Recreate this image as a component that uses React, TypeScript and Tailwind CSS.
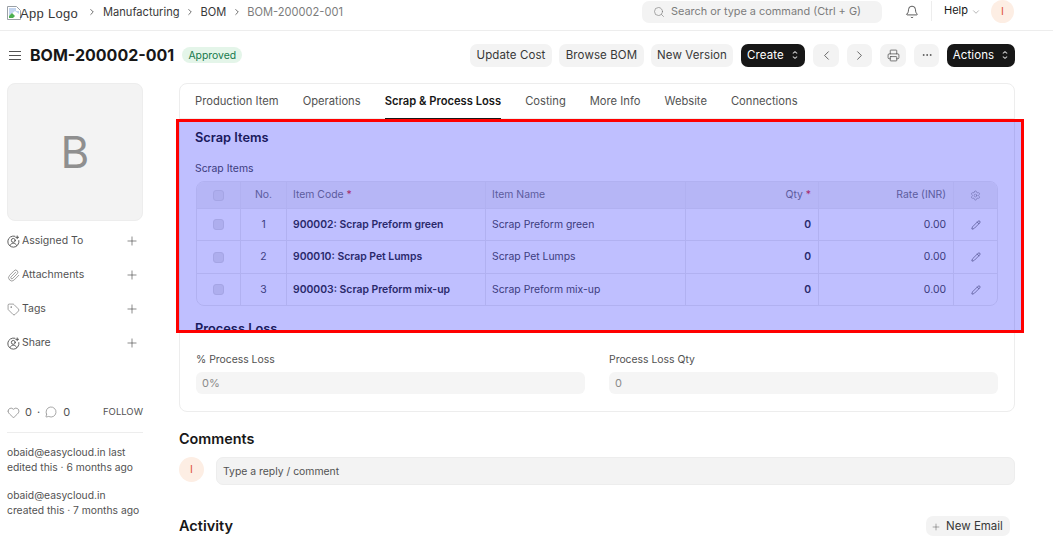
import React from 'react';
import { Bell, ChevronDown, ChevronLeft, ChevronRight, Ellipsis, Heart, MessageCircle, Paperclip, Pencil, Plus, Printer, Search, Settings, Tag } from 'lucide-react';

const Updown = () => (
  <svg width="8" height="12" viewBox="0 0 8 12" fill="none" stroke="currentColor" strokeWidth="1.1" strokeLinecap="round" strokeLinejoin="round" className="opacity-75">
    <path d="M2.2 4.2 4 2.6l1.8 1.6M2.2 7.8 4 9.4l1.8-1.6" />
  </svg>
);

const AssignIcon = () => (
  <svg width="13" height="13" viewBox="0 0 14 14" fill="none" stroke="#525252" strokeWidth="1" strokeLinecap="round">
    <path d="M8.5 1.3A6 6 0 1 0 12.8 6" />
    <circle cx="6.8" cy="5.8" r="2.1" />
    <path d="M3.2 11.3c.7-1.6 2-2.4 3.6-2.4s2.9.8 3.6 2.4" />
    <path d="M11 1v3M9.5 2.5h3" />
  </svg>
);

const BrokenImage = () => (
  <svg width="14" height="14" viewBox="0 0 14 14" className="shrink-0">
    <path d="M.5.5h9l4 4v9H.5z" fill="#fff" stroke="#9aa0a6" />
    <path d="M2 2h7v3h3v3L8 5 2 10z" fill="#c3d5f0" />
    <path d="M2 10l3-3 3 3-2 2H2z" fill="#4caf50" />
  </svg>
);

const ToolButton = ({ children, className = '' }: { children: React.ReactNode; className?: string }) => (
  <button className={`h-[23px] rounded-[7px] bg-[#f3f3f3] flex items-center justify-center text-[11.5px] tracking-[0.1px] text-[#383838] ${className}`}>
    {children}
  </button>
);

const DarkButton = ({ label, width }: { label: string; width: string }) => (
  <button className={`h-[23px] ${width} rounded-[7px] bg-[#171717] text-white text-[11.5px] tracking-[0.1px] flex items-center justify-center gap-[7px]`}>
    <span className="pt-[2px]">{label}</span>
    <Updown />
  </button>
);

const SideRow = ({ icon, label }: { icon: React.ReactNode; label: string }) => (
  <div className="h-[34px] flex items-start">
    <span className="w-[15px] mt-[2px] flex justify-start shrink-0">{icon}</span>
    <span className="text-[10.5px] text-[#525252] leading-[16px]">{label}</span>
    <Plus size={14} strokeWidth={1} className="ml-auto mr-[4px] mt-[1px] text-[#383838]" />
  </div>
);

const rows = [
  { no: 1, code: '900002: Scrap Preform green', name: 'Scrap Preform green', h: 'h-[32px]' },
  { no: 2, code: '900010: Scrap Pet Lumps', name: 'Scrap Pet Lumps', h: 'h-[33px]' },
  { no: 3, code: '900003: Scrap Preform mix-up', name: 'Scrap Preform mix-up', h: 'h-[32px]' },
];

const cols = 'grid grid-cols-[44px_46px_199px_200px_133px_135px_1fr]';
const cell = 'border-r border-[#ededed] flex items-center px-[6px]';
const numCell = 'border-r border-[#ededed] flex items-center justify-end pr-[7px]';

const Checkbox = () => <span className="w-[11px] h-[11px] rounded-[3px] bg-[#e8e8e8] border border-[#dcdcdc]" />;

const Tab = ({ label, active }: { label: string; active?: boolean }) => (
  <div className={`h-[35px] flex items-center text-[11.2px] ${active ? 'font-semibold text-[#171717] border-b border-[#171717]' : 'text-[#525252]'}`}>
    {label}
  </div>
);

const Field = ({ label, value }: { label: string; value: string }) => (
  <div className="flex-1">
    <div className="text-[10.4px] leading-[14px] text-[#525252]">{label}</div>
    <div className="mt-[5px] h-[22px] rounded-[6px] bg-[#f5f5f5] flex items-center px-[6px] text-[11px] text-[#8a8a8a]">{value}</div>
  </div>
);

export default function App() {
  return (
    <div className="relative h-[542px] w-[1053px] overflow-hidden bg-white font-['Inter',sans-serif]">
      <header className="h-[31px] border-b border-[#ededed] flex items-center pl-[7px] pr-[39px]">
        <div className="flex items-center -mt-[4px]">
          <BrokenImage />
          <span className="text-[13px] text-[#383838] font-['Liberation_Sans',sans-serif] -ml-[1px] mt-[2px] tracking-[0.3px]">App Logo</span>
        </div>
        <nav className="ml-[9px] -mt-[6px] flex items-center text-[11.1px] text-[#383838]">
          <ChevronRight size={10} className="mr-[6px] text-[#525252]" />
          <span>Manufacturing</span>
          <ChevronRight size={10} className="mx-[5.5px] text-[#525252]" />
          <span>BOM</span>
          <ChevronRight size={10} className="mx-[5.5px] text-[#525252]" />
          <span className="text-[#7c7c7c]">BOM-200002-001</span>
        </nav>
        <div className="ml-auto -mt-[7px] w-[240px] h-[22px] rounded-[7px] bg-[#f3f3f3] flex items-center pl-[11px] text-[10.9px] text-[#7c7c7c]">
          <Search size={12} strokeWidth={1.3} className="mr-[6px]" />
          Search or type a command (Ctrl + G)
        </div>
        <Bell size={14} strokeWidth={1.2} className="ml-[23px] -mt-[7px] text-[#171717]" />
        <span className="ml-[12px] -mt-[8px] w-px h-[20px] bg-[#ededed]" />
        <span className="ml-[12px] -mt-[10px] text-[11px] text-[#171717]">Help</span>
        <ChevronDown size={10} strokeWidth={1} className="ml-[3px] -mt-[7px] text-[#525252]" />
        <span className="ml-[10px] -mt-[7px] w-[23px] h-[23px] rounded-full bg-[#fdeee4] text-[#e05a45] text-[11px] flex items-center justify-center">I</span>
      </header>

      <div className="h-[52px] flex items-center pl-[9px] pr-[38px] pb-[4px]">
        <svg width="12" height="11" viewBox="0 0 12 11" className="text-[#525252]" stroke="currentColor" strokeWidth="1">
          <path d="M0 1.5h12M0 5.5h12M0 9.5h12" />
        </svg>
        <h1 className="ml-[9px] text-[16px] leading-none font-bold text-[#171717]">BOM-200002-001</h1>
        <span className="ml-[8px] h-[16px] w-[60px] pt-px rounded-full bg-[#e4f5e9] text-[#16794c] text-[10.4px] flex items-center justify-center">Approved</span>
        <div className="ml-auto flex items-center gap-[7px]">
          <ToolButton className="w-[82px] pt-[2px]">Update Cost</ToolButton>
          <ToolButton className="w-[85px] pt-[2px]">Browse BOM</ToolButton>
          <ToolButton className="w-[82px] pt-[2px] mr-[1px]">New Version</ToolButton>
          <DarkButton label="Create" width="w-[64px] mr-[1px]" />
          <ToolButton className="w-[26px] mr-[1px]"><ChevronLeft size={15} strokeWidth={1.2} /></ToolButton>
          <ToolButton className="w-[25px] mr-[1px]"><ChevronRight size={15} strokeWidth={1.2} /></ToolButton>
          <ToolButton className="w-[26px] mr-[1px]"><Printer size={13} strokeWidth={1.2} /></ToolButton>
          <ToolButton className="w-[25px] mr-[1px]"><Ellipsis size={12} strokeWidth={1.4} /></ToolButton>
          <DarkButton label="Actions" width="w-[68px]" />
        </div>
      </div>

      <div className="flex pl-[7px] pr-[38px]">
        <aside className="w-[136px] shrink-0">
          <div className="h-[138px] rounded-[8px] bg-[#f3f3f3] border border-[#ededed] flex items-center justify-center text-[44px] text-[#8f8f8f]">B</div>
          <div className="mt-[12px]">
            <SideRow icon={<AssignIcon />} label="Assigned To" />
            <SideRow icon={<Paperclip size={13} strokeWidth={1} className="text-[#525252]" />} label="Attachments" />
            <SideRow icon={<Tag size={13} strokeWidth={1} className="text-[#525252]" />} label="Tags" />
            <SideRow icon={<AssignIcon />} label="Share" />
          </div>
          <div className="mt-[35px] flex items-center text-[11px] text-[#525252]">
            <Heart size={13} strokeWidth={1} />
            <span className="ml-[5px]">0</span>
            <span className="mx-[5px]">·</span>
            <MessageCircle size={12} strokeWidth={1} />
            <span className="ml-[6px]">0</span>
            <span className="ml-auto text-[9.5px]">FOLLOW</span>
          </div>
          <div className="mt-[11px] border-t border-[#ededed] pt-[12px] text-[10.3px] leading-[15.5px] text-[#525252]">
            <p>obaid@easycloud.in last<br />edited this · 6 months ago</p>
            <p className="mt-[12px]">obaid@easycloud.in<br />created this · 7 months ago</p>
          </div>
        </aside>

        <main className="ml-[36px] flex-1">
          <section className="h-[329px] rounded-[8px] border border-[#ededed] overflow-hidden">
            <div className="h-[35px] border-b border-[#ededed] flex gap-[24px] pl-[15px]">
              <Tab label="Production Item" />
              <Tab label="Operations" />
              <Tab label="Scrap & Process Loss" active />
              <Tab label="Costing" />
              <Tab label="More Info" />
              <Tab label="Website" />
              <Tab label="Connections" />
            </div>
            <div className="px-[16px]">
              <h2 className="mt-[11px] -ml-px text-[12.8px] leading-[16px] font-semibold text-[#262626]">Scrap Items</h2>
              <div className="mt-[16px] -ml-px text-[10.4px] leading-[14px] text-[#525252]">Scrap Items</div>
              <div className="mt-[5px] rounded-[8px] border border-[#ededed] overflow-hidden text-[10.4px]">
                <div className={`${cols} h-[26px] bg-[#f3f3f3] text-[#7c7c7c]`}>
                  <div className={`${cell} justify-center`}><Checkbox /></div>
                  <div className={`${cell} justify-center`}>No.</div>
                  <div className={cell}>Item Code&nbsp;<span className="text-[#e03636]">*</span></div>
                  <div className={cell}>Item Name</div>
                  <div className={numCell}>Qty&nbsp;<span className="text-[#e03636]">*</span></div>
                  <div className={numCell}>Rate (INR)</div>
                  <div className="flex items-center justify-center"><Settings size={11} strokeWidth={1} /></div>
                </div>
                {rows.map((r) => (
                  <div key={r.no} className={`${cols} ${r.h} border-t border-[#ededed] text-[#525252]`}>
                    <div className={`${cell} justify-center`}><Checkbox /></div>
                    <div className={`${cell} justify-center`}>{r.no}</div>
                    <div className={`${cell} font-semibold text-[#383838]`}>{r.code}</div>
                    <div className={cell}>{r.name}</div>
                    <div className={`${numCell} font-semibold text-[#383838]`}>0</div>
                    <div className={numCell}>0.00</div>
                    <div className="flex items-center justify-center text-[#383838]"><Pencil size={10} strokeWidth={1.3} /></div>
                  </div>
                ))}
              </div>
              <h2 className="mt-[15px] -ml-px text-[12.8px] leading-[16px] font-semibold text-[#262626]">Process Loss</h2>
              <div className="mt-[16px] flex gap-[24px]">
                <Field label="% Process Loss" value="0%" />
                <Field label="Process Loss Qty" value="0" />
              </div>
            </div>
          </section>

          <h2 className="mt-[18px] text-[14.4px] leading-[18px] font-semibold text-[#171717]">Comments</h2>
          <div className="mt-[9px] flex">
            <span className="w-[25px] h-[25px] rounded-full bg-[#fdeee4] text-[#e05a45] text-[11px] flex items-center justify-center">I</span>
            <div className="ml-[12px] flex-1 h-[28px] rounded-[7px] bg-[#f3f3f3] border border-[#ededed] flex items-center px-[6px] pt-px text-[10.4px] text-[#525252]">Type a reply / comment</div>
          </div>
          <div className="mt-[31px] flex items-center pr-[5px]">
            <h2 className="text-[14.5px] leading-[20px] font-semibold text-[#171717]">Activity</h2>
            <button className="ml-auto w-[84px] h-[20px] pt-px pr-[2px] rounded-[7px] bg-[#f3f3f3] flex items-center justify-center gap-[5px] text-[11.5px] text-[#383838]">
              <Plus size={10} strokeWidth={1} />
              New Email
            </button>
          </div>
        </main>
      </div>

      <div className="absolute left-[176px] top-[119px] w-[848px] h-[214px] border-[3px] border-[#ff0000] bg-[#0000ff]/25" />
    </div>
  );
}
